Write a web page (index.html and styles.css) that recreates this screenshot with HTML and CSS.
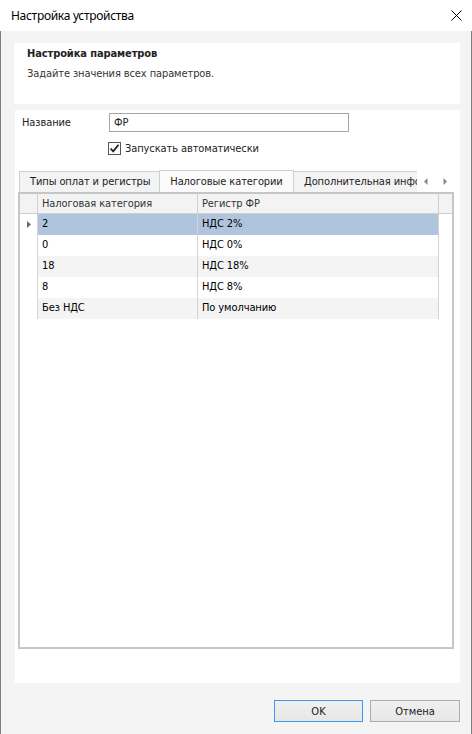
FILE: index.html
```html
<!DOCTYPE html>
<html lang="ru">
<head>
<meta charset="utf-8">
<title>Настройка устройства</title>
<link rel="stylesheet" href="styles.css">
</head>
<body>
<div class="window">
  <div class="titlebar">
    <span class="title">Настройка устройства</span>
    <svg class="close" width="11" height="11" viewBox="0 0 11 11"><path d="M0.5 0.5 L10.5 10.5 M10.5 0.5 L0.5 10.5" stroke="#000" stroke-width="1" fill="none"/></svg>
  </div>
  <div class="body">
    <div class="header-panel">
      <div class="h-title">Настройка параметров</div>
      <div class="h-desc">Задайте значения всех параметров.</div>
    </div>
    <div class="main-panel">
      <div class="name-row">
        <label class="name-label">Название</label>
        <div class="input">ФР</div>
      </div>
      <div class="check-row">
        <span class="checkbox"><svg width="11" height="11" viewBox="0 0 11 11"><path d="M1.5 5.5 L4.2 8.3 L9.5 1.8" stroke="#222" stroke-width="1.8" fill="none"/></svg></span>
        <span class="check-text">Запускать автоматически</span>
      </div>
      <div class="tabstrip">
        <div class="tabs">
          <div class="tab">Типы оплат и регистры</div>
          <div class="tab active">Налоговые категории</div>
          <div class="tab clipped">Дополнительная информация</div>
        </div>
        <div class="tab-arrows">
          <svg width="4" height="7" viewBox="0 0 4 7"><path d="M3.5 0 L0 3.5 L3.5 7 Z" fill="#8a8a8a"/></svg>
          <svg width="4" height="7" viewBox="0 0 4 7"><path d="M0.5 0 L4 3.5 L0.5 7 Z" fill="#8a8a8a"/></svg>
        </div>
      </div>
      <div class="grid">
        <div class="row head">
          <div class="cell rh"></div>
          <div class="cell c1">Налоговая категория</div>
          <div class="cell c2">Регистр ФР</div>
          <div class="cell fill"></div>
        </div>
        <div class="row sel">
          <div class="cell rh"><svg width="4" height="7" viewBox="0 0 4 7"><path d="M0 0 L4 3.5 L0 7 Z" fill="#6a6a6a"/></svg></div>
          <div class="cell c1">2</div>
          <div class="cell c2">НДС 2%</div>
        </div>
        <div class="row">
          <div class="cell rh"></div>
          <div class="cell c1">0</div>
          <div class="cell c2">НДС 0%</div>
        </div>
        <div class="row alt">
          <div class="cell rh"></div>
          <div class="cell c1">18</div>
          <div class="cell c2">НДС 18%</div>
        </div>
        <div class="row">
          <div class="cell rh"></div>
          <div class="cell c1">8</div>
          <div class="cell c2">НДС 8%</div>
        </div>
        <div class="row alt">
          <div class="cell rh"></div>
          <div class="cell c1">Без НДС</div>
          <div class="cell c2">По умолчанию</div>
        </div>
      </div>
    </div>
    <div class="buttons">
      <button class="btn default">OK</button>
      <button class="btn">Отмена</button>
    </div>
  </div>
</div>
</body>
</html>
```
FILE: styles.css
```css
* { box-sizing: border-box; }
html, body { margin: 0; padding: 0; }
body {
  width: 472px;
  height: 734px;
  background: #fff;
  font-family: "DejaVu Sans Condensed", "DejaVu Sans", sans-serif;
  font-size: 11px;
  letter-spacing: -0.1px;
  color: #000;
  overflow: hidden;
}
.window {
  width: 472px;
  height: 734px;
  display: flex;
  flex-direction: column;
}
.titlebar {
  width: 472px;
  height: 31px;
  flex: none;
  background: #fff;
  display: flex;
  align-items: center;
  padding: 0 0 0 11px;
}
.title {
  font-family: "Noto Sans", sans-serif;
  font-size: 12px;
  letter-spacing: -0.3px;
  color: #000;
  flex: 1;
}
.close { display: block; flex: none; margin-right: 10px; }
.body {
  flex: 1;
  background: #f4f4f4;
  border-left: 1px solid #7e7e7e;
  border-right: 1px solid #7e7e7e;
  padding: 12px 11px 0 13px;
  display: flex;
  flex-direction: column;
}
.header-panel {
  background: #fff;
  height: 61px;
  padding: 4px 13px 0;
}
.h-title {
  font-weight: bold;
  line-height: 14px;
  color: #222;
}
.h-desc {
  margin-top: 6px;
  line-height: 14px;
  color: #333;
}
.main-panel {
  margin: 6px 0 0 1px;
  height: 573px;
  background: #fff;
  padding: 3px 0 0 3px;
  display: flex;
  flex-direction: column;
}
.name-row {
  display: flex;
  align-items: center;
  height: 19px;
}
.name-label {
  width: 91px;
  padding-left: 4px;
  color: #222;
}
.input {
  width: 240px;
  height: 19px;
  border: 1px solid #a6a6a6;
  padding: 0 4px;
  line-height: 17px;
  color: #222;
}
.check-row {
  margin-top: 10px;
  margin-left: 90px;
  display: flex;
  align-items: center;
  height: 13px;
}
.checkbox {
  width: 13px;
  height: 13px;
  border: 1px solid #555;
  background: #fff;
  display: flex;
  align-items: center;
  justify-content: center;
}
.check-text {
  margin-left: 4px;
  color: #222;
}
.tabstrip {
  margin-top: 15px;
  height: 22px;
  display: flex;
  align-items: flex-end;
  position: relative;
  z-index: 1;
}
.tabs {
  display: flex;
  align-items: flex-end;
  width: 398px;
  overflow: hidden;
  margin-left: 1px;
}
.tab {
  flex: none;
  height: 21px;
  border: 1px solid #cfcfcf;
  border-bottom: none;
  background: #f3f3f3;
  padding: 0 10px;
  line-height: 20px;
  color: #222;
  white-space: nowrap;
}
.tab:first-child { width: 141px; text-align: center; }
.tab.active {
  height: 24px;
  width: 135px;
  background: #fbfbfb;
  margin-left: -1px;
  line-height: 22px;
  text-align: center;
  margin-bottom: -2px;
}
.tab.clipped {
  margin-left: -1px;
  background: #f3f3f3;
}
.tab-arrows {
  display: flex;
  gap: 15px;
  align-items: center;
  height: 22px;
  padding-left: 7px;
}
.grid {
  width: 436px;
  height: 457px;
  border: 2px solid #c6c6c6;
  background: #fff;
}
.row {
  display: grid;
  grid-template-columns: 18px 160px 241px 13px;
  height: 21px;
}
.row.head {
  height: 20px;
  background: #f3f3f3;
  border-bottom: 1px solid #cfcfcf;
}
.cell {
  line-height: 20px;
  padding-left: 4px;
  white-space: nowrap;
  overflow: hidden;
  border-right: 1px solid #d3d3d3;
}
.head .cell { border-right-color: #cfcfcf; line-height: 19px; color: #333; }
.head .fill { border-right: none; }
.rh {
  padding: 0;
  display: flex;
  align-items: center;
  justify-content: center;
  background: #fff;
}
.head .rh { background: #f3f3f3; }
.row.alt .c1, .row.alt .c2 { background: #f4f4f4; }
.row.sel .c1, .row.sel .c2 { background: #b0c4de; }
.buttons {
  display: flex;
  justify-content: flex-end;
  gap: 7px;
  margin-top: 17px;
}
.btn {
  font-family: "DejaVu Sans Condensed", "DejaVu Sans", sans-serif;
  font-size: 11px;
  color: #222;
  height: 22px;
  width: 90px;
  border: 1px solid #adadad;
  background: linear-gradient(#f0f0f0, #e6e6e6);
  padding: 0;
}
.btn.default {
  width: 89px;
  border-color: #3c9bf0;
}
```
